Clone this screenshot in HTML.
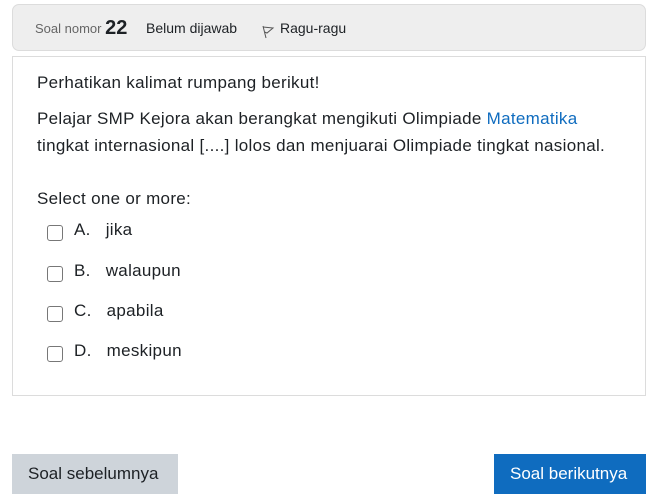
<!DOCTYPE html>
<html><head><meta charset="utf-8"><style>
body{margin:0;width:647px;height:486px;overflow:hidden;background:#fff;font-family:"Liberation Sans",sans-serif;color:#1d2125;position:relative}
.top{position:absolute;left:12px;top:4px;width:634px;height:47px;background:#eeeeee;border:1px solid #dcdcdc;border-radius:7px;box-sizing:border-box}
.top span{position:absolute;top:0;line-height:46px;font-size:14px}
.box{position:absolute;left:12px;top:56px;width:634px;height:340px;border:1px solid #dcdcdc;box-sizing:border-box}
.t{position:absolute;left:37px;font-size:17px;white-space:nowrap;letter-spacing:0.3px}
.cb{position:absolute;left:47px;width:16px;height:16px;border:1px solid #777;border-radius:3px;box-sizing:border-box;background:#fff}
.btn{position:absolute;top:454px;height:40px;line-height:40px;font-size:17px;padding:0 16px;white-space:nowrap;box-sizing:border-box}
</style></head><body>
<div class="top">
<span style="left:22px;font-size:13px;color:#666">Soal nomor <b style="font-size:20px;color:#1d2125;vertical-align:-1px">22</b></span>
<span style="left:133px">Belum dijawab</span>
<svg style="position:absolute;left:248px;top:20px" width="14" height="14" viewBox="0 0 14 14"><path d="M2 1 L5 13 M2 2 L12 3 L6 8 L3.5 7" fill="none" stroke="#555" stroke-width="1"/></svg>
<span style="left:267px">Ragu-ragu</span>
</div>
<div class="box"></div>
<div class="t" style="top:73px">Perhatikan kalimat rumpang berikut!</div>
<div class="t" style="top:109px">Pelajar SMP Kejora akan berangkat mengikuti Olimpiade <span style="color:#0f6cbf">Matematika</span></div>
<div class="t" style="top:136px">tingkat internasional [....] lolos dan menjuarai Olimpiade tingkat nasional.</div>
<div class="t" style="top:189px">Select one or more:</div>
<div class="cb" style="top:225px"></div><div class="t" style="left:74px;top:220px">A.&nbsp;&nbsp;&nbsp;jika</div>
<div class="cb" style="top:266px"></div><div class="t" style="left:74px;top:261px">B.&nbsp;&nbsp;&nbsp;walaupun</div>
<div class="cb" style="top:306px"></div><div class="t" style="left:74px;top:301px">C.&nbsp;&nbsp;&nbsp;apabila</div>
<div class="cb" style="top:346px"></div><div class="t" style="left:74px;top:341px">D.&nbsp;&nbsp;&nbsp;meskipun</div>
<div class="btn" style="left:12px;width:166px;background:#ced4da;color:#1d2125">Soal sebelumnya</div>
<div class="btn" style="left:494px;width:152px;background:#0f6cbf;color:#fff">Soal berikutnya</div>
</body></html>
